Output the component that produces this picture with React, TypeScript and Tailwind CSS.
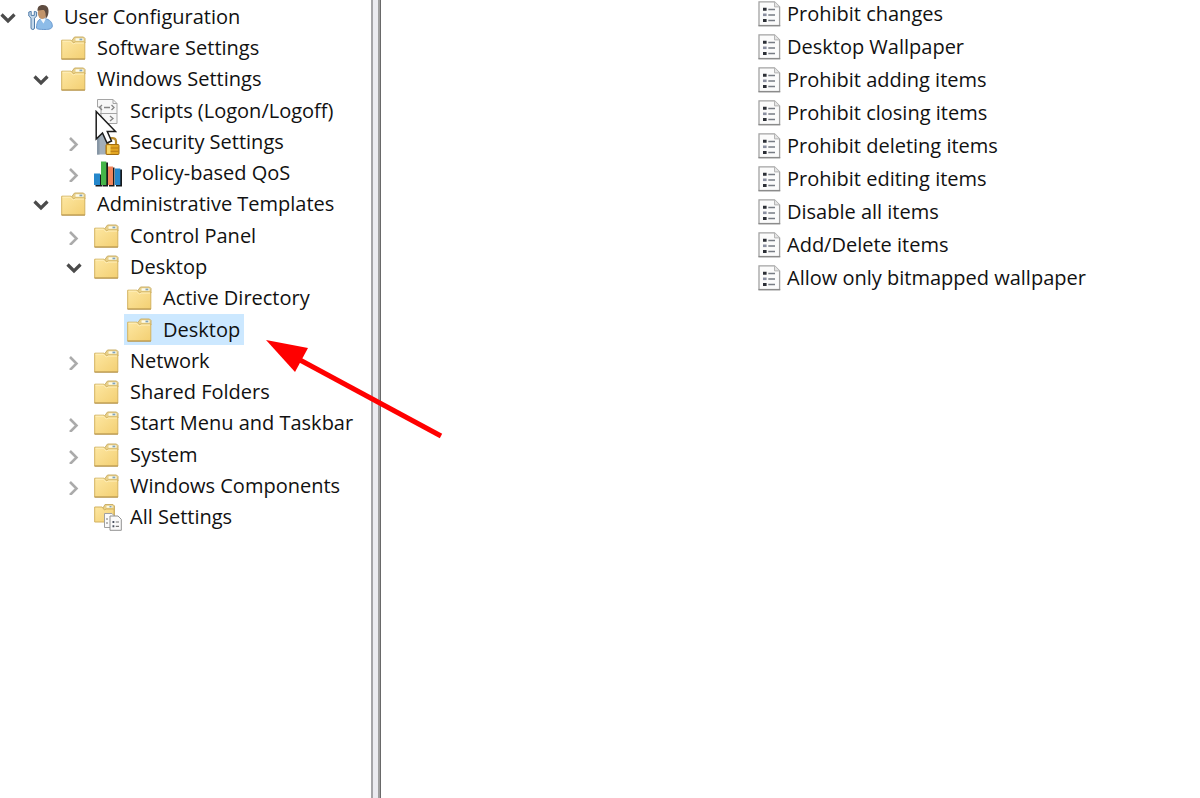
import type { ReactNode } from "react";

type TreeItem = {
  label: string;
  level: number;
  icon: "user" | "folder" | "script" | "security" | "qos" | "all";
  state?: "open" | "closed";
  selected?: boolean;
};

const treeItems: TreeItem[] = [
  { label: "User Configuration", level: 0, icon: "user", state: "open" },
  { label: "Software Settings", level: 1, icon: "folder" },
  { label: "Windows Settings", level: 1, icon: "folder", state: "open" },
  { label: "Scripts (Logon/Logoff)", level: 2, icon: "script" },
  { label: "Security Settings", level: 2, icon: "security", state: "closed" },
  { label: "Policy-based QoS", level: 2, icon: "qos", state: "closed" },
  { label: "Administrative Templates", level: 1, icon: "folder", state: "open" },
  { label: "Control Panel", level: 2, icon: "folder", state: "closed" },
  { label: "Desktop", level: 2, icon: "folder", state: "open" },
  { label: "Active Directory", level: 3, icon: "folder" },
  { label: "Desktop", level: 3, icon: "folder", selected: true },
  { label: "Network", level: 2, icon: "folder", state: "closed" },
  { label: "Shared Folders", level: 2, icon: "folder" },
  { label: "Start Menu and Taskbar", level: 2, icon: "folder", state: "closed" },
  { label: "System", level: 2, icon: "folder", state: "closed" },
  { label: "Windows Components", level: 2, icon: "folder", state: "closed" },
  { label: "All Settings", level: 2, icon: "all" },
];

const policies = [
  "Prohibit changes",
  "Desktop Wallpaper",
  "Prohibit adding items",
  "Prohibit closing items",
  "Prohibit deleting items",
  "Prohibit editing items",
  "Disable all items",
  "Add/Delete items",
  "Allow only bitmapped wallpaper",
];

const indents = ["pl-0", "pl-[33px]", "pl-[66px]", "pl-[99px]"];

function Icon({ children }: { children: ReactNode }) {
  return (
    <svg viewBox="0 0 28 28" className="size-7 shrink-0" aria-hidden="true">
      {children}
    </svg>
  );
}

function FolderShape() {
  return (
    <>
      <path d="M10.5 7 L13.5 3 H22.5 L24 4.5 V9 H10.5 Z" fill="#e8d08a" stroke="#cbb06a" strokeWidth="1" />
      <rect x="14.5" y="4.2" width="8" height="2.6" rx="0.6" fill="#fdfbea" />
      <rect x="18.5" y="4.6" width="2.8" height="1.7" fill="#7fa3bd" />
      <path d="M0.7 6.2 H10 L12.5 9 L14 8 H23.8 V25 H0.7 Z" fill="url(#folder)" stroke="#d3b25f" strokeWidth="1" />
      <path d="M1.5 7.2 H9.6 L12.3 10 L14.2 9 H23" fill="none" stroke="#fff0bd" strokeWidth="1" />
      <path d="M0.5 25.1 H24" stroke="#b3914c" strokeWidth="1" />
    </>
  );
}

function TreeIcon({ name }: { name: TreeItem["icon"] }) {
  if (name === "user") {
    return (
      <Icon>
        <path d="M8.5 25 C8.5 18.5 11 15.5 14.5 15.5 C20 15.5 24.3 18 24.3 23 C24.3 25.8 21 26.5 17 26.5 C12 26.5 8.5 26 8.5 25 Z" fill="#8dbce8" stroke="#6b9bd0" strokeWidth="1" />
        <path d="M12 15.6 L15.5 20.5 L18 15.6 Z" fill="#f2f7fc" />
        <ellipse cx="14.2" cy="10" rx="4.4" ry="6" fill="#c2946a" />
        <path d="M9.6 8 C9 3.5 12 2 15 2 C19 2 21 5 20.5 9 C20.2 12 19.5 14.5 17.5 15.5 C18 11 17.5 9 16 7 C13.5 7.2 11 7 9.6 8 Z" fill="#5f4c40" />
        <path d="M0.8 9 V13 L3 15.2 V25 C3 27 6.5 27 6.5 25 V15.2 L8.6 13 V9 L6.3 8.4 V12.4 H3.2 V8.4 Z" fill="#c4d8ea" stroke="#4f7ba8" strokeWidth="1" />
      </Icon>
    );
  }
  if (name === "script") {
    return (
      <Icon>
        <path d="M3.5 2.5 H19 L23 6.5 V26.5 H7 V10 H3.5 Z" fill="#f7f7f7" stroke="#a5a5a5" strokeWidth="1" />
        <path d="M19 2.5 V6.5 H23 M6 16.5 H23" fill="none" stroke="#a5a5a5" />
        <path d="M8 8 L5.5 10.5 L8 13 M17.5 8 L20 10.5 L17.5 13 M10 10.5 H16 M16 19 L19 21.5 L16 24" fill="none" stroke="#858585" strokeWidth="1.3" />
      </Icon>
    );
  }
  if (name === "security") {
    return (
      <Icon>
        <path d="M3 9 L5 6 H15 V26.5 H3 Z" fill="#a3afba" />
        <path d="M3 9 H5.5 V26.5 H3 Z" fill="#8796a5" />
        <path d="M14 18 V13.5 C14 9 22 9 22 13.5 V18" fill="none" stroke="#b98b2d" strokeWidth="2.2" />
        <rect x="12" y="16.5" width="13" height="10" rx="1" fill="#e3a622" stroke="#a06c12" />
        <path d="M12.5 20 H24.5 M12.5 23.3 H24.5" stroke="#b77b15" strokeWidth="1" />
        <rect x="13" y="17.3" width="3.5" height="8.4" fill="#f9d665" />
      </Icon>
    );
  }
  if (name === "qos") {
    return (
      <Icon>
        <path d="M1.5 15.5 H8 V27.5 H1.5 Z M8.5 3.5 H14 V27.5 H8.5 Z M15 8.5 H20.5 V27.5 H15 Z M22 10.5 H28 V27.5 H22 Z" fill="#17191c" />
        <path d="M0 14.5 H6 V26 H0 Z M21 9.5 H26.3 V26 H21 Z" fill="#2587cb" />
        <path d="M7 2.5 H12.3 V26 H7 Z" fill="#45b549" />
        <path d="M14 7.5 H19 V26 H14 Z" fill="#f1845b" />
      </Icon>
    );
  }
  if (name === "all") {
    return (
      <Icon>
        <path d="M9 5 L11 1.5 H19 L20.5 3 V16 H9 Z" fill="#e8d08a" stroke="#cbb06a" />
        <rect x="12.5" y="2.8" width="6" height="2" fill="#fdfbea" />
        <rect x="15.5" y="3" width="2" height="1.4" fill="#7fa3bd" />
        <path d="M0.7 4 H8 L10.5 7 L12 6 H20 V19 H0.7 Z" fill="url(#folder)" stroke="#d3b25f" />
        <path d="M10.5 10.5 H18 L20 12.5 V24.5 H10.5 Z" fill="#fafafa" stroke="#a0a0a0" />
        <path d="M16 13 H24 L27.3 16.3 V27.3 H16 Z" fill="#fafafa" stroke="#929292" />
        <path d="M18.5 19 H20.3 M18.5 23.3 H20.3" stroke="#48505e" strokeWidth="2" />
        <path d="M21.8 19 H25 M21.8 23.3 H25 M12 16 H14 M12 20 H14" stroke="#767676" strokeWidth="1.2" />
      </Icon>
    );
  }
  return (
    <Icon>
      <FolderShape />
    </Icon>
  );
}

function Chevron({ state }: { state: "open" | "closed" }) {
  return (
    <svg viewBox="0 0 16 18" className="h-[18px] w-4" fill="none" aria-hidden="true">
      {state === "open" ? (
        <path d="M1.5 6.5 L8 13 L14.5 6.5" stroke="#4b4b4b" strokeWidth="3.2" />
      ) : (
        <path d="M4 5 L10.5 11.5 L4 18" stroke="#ababab" strokeWidth="2.6" />
      )}
    </svg>
  );
}

function PolicyIcon() {
  return (
    <svg viewBox="0 0 24 26" className="h-[26px] w-6 shrink-0" aria-hidden="true">
      <path d="M1 0.8 H16.5 L21.6 5.9 V24.6 H1 Z" fill="#fbfbfb" stroke="#a3a3a3" strokeWidth="1.3" />
      <path d="M16.5 0.8 V5.9 H21.6" fill="#e4e4e4" stroke="#b5b5b5" />
      <path d="M0.5 24.6 H22.2" stroke="#8b8b8b" strokeWidth="1.4" />
      <path d="M5 8.3 H8.6 M5 19.4 H8.6" stroke="#2c2f36" strokeWidth="3" />
      <path d="M5 13.8 H8.6" stroke="#8a8fa0" strokeWidth="2.6" />
      <path d="M10.3 8.5 H17 M10.3 14 H17 M10.3 19.5 H17" stroke="#777c84" strokeWidth="1.4" />
    </svg>
  );
}

export default function App() {
  return (
    <div className="relative flex min-h-screen overflow-hidden bg-white font-['Open_Sans',sans-serif] text-[20px] leading-7 text-[#111111]">
      <svg className="absolute size-0" aria-hidden="true">
        <linearGradient id="folder" x1="0" y1="0" x2="1" y2="1">
          <stop offset="0" stopColor="#fde7a2" />
          <stop offset="1" stopColor="#f3cf72" />
        </linearGradient>
      </svg>

      <nav className="w-[371px] shrink-0 pt-px" aria-label="Console tree">
        <ul className="grid h-[532px] auto-rows-fr">
          {treeItems.map((item, index) => (
            <li key={index} className={`flex ${indents[item.level]}`}>
              {item.state ? (
                <button
                  type="button"
                  className="flex w-[25px] items-center"
                  aria-label={`Toggle ${item.label}`}
                  aria-expanded={item.state === "open"}
                >
                  <Chevron state={item.state} />
                </button>
              ) : (
                <span className="w-[25px]" />
              )}
              <button
                type="button"
                className={`flex items-center gap-2 pr-1 pl-[3px] whitespace-nowrap ${
                  item.selected ? "bg-[#cce8ff]" : ""
                }`}
              >
                <TreeIcon name={item.icon} />
                {item.label}
              </button>
            </li>
          ))}
        </ul>
      </nav>

      <div className="flex w-[10px] shrink-0 bg-[#ebebf0]">
        <div className="w-[2px] bg-[#a5a5a8]" />
        <div className="flex-1" />
        <div className="w-[2px] bg-[#a0a0a0]" />
        <div className="w-px bg-[#696969]" />
      </div>

      <main className="flex-1 pl-[377px]">
        <ul className="flex flex-col gap-[5px]">
          {policies.map((policy) => (
            <li key={policy}>
              <button type="button" className="flex items-center gap-[5px] whitespace-nowrap">
                <PolicyIcon />
                {policy}
              </button>
            </li>
          ))}
        </ul>
      </main>

      {/* callout arrow */}
      <svg
        viewBox="0 0 180 104"
        className="pointer-events-none absolute top-[337px] left-[264px] h-[104px] w-[180px]"
        aria-hidden="true"
      >
        <path d="M177 99 L36 23" stroke="#ff0000" strokeWidth="5" />
        <path d="M2 3 L44 11 L31 35 Z" fill="#ff0000" />
      </svg>

      {/* mouse pointer */}
      <svg
        viewBox="0 0 22 34"
        className="pointer-events-none absolute top-[110px] left-[95px] h-[34px] w-[22px]"
        aria-hidden="true"
      >
        <path
          d="M1.2 1.5 V29 L7.5 23 L12 33 L16.5 31 L12.3 21.5 H20.5 Z"
          fill="#ffffff"
          stroke="#1c1c1c"
          strokeWidth="1.5"
        />
      </svg>
    </div>
  );
}
